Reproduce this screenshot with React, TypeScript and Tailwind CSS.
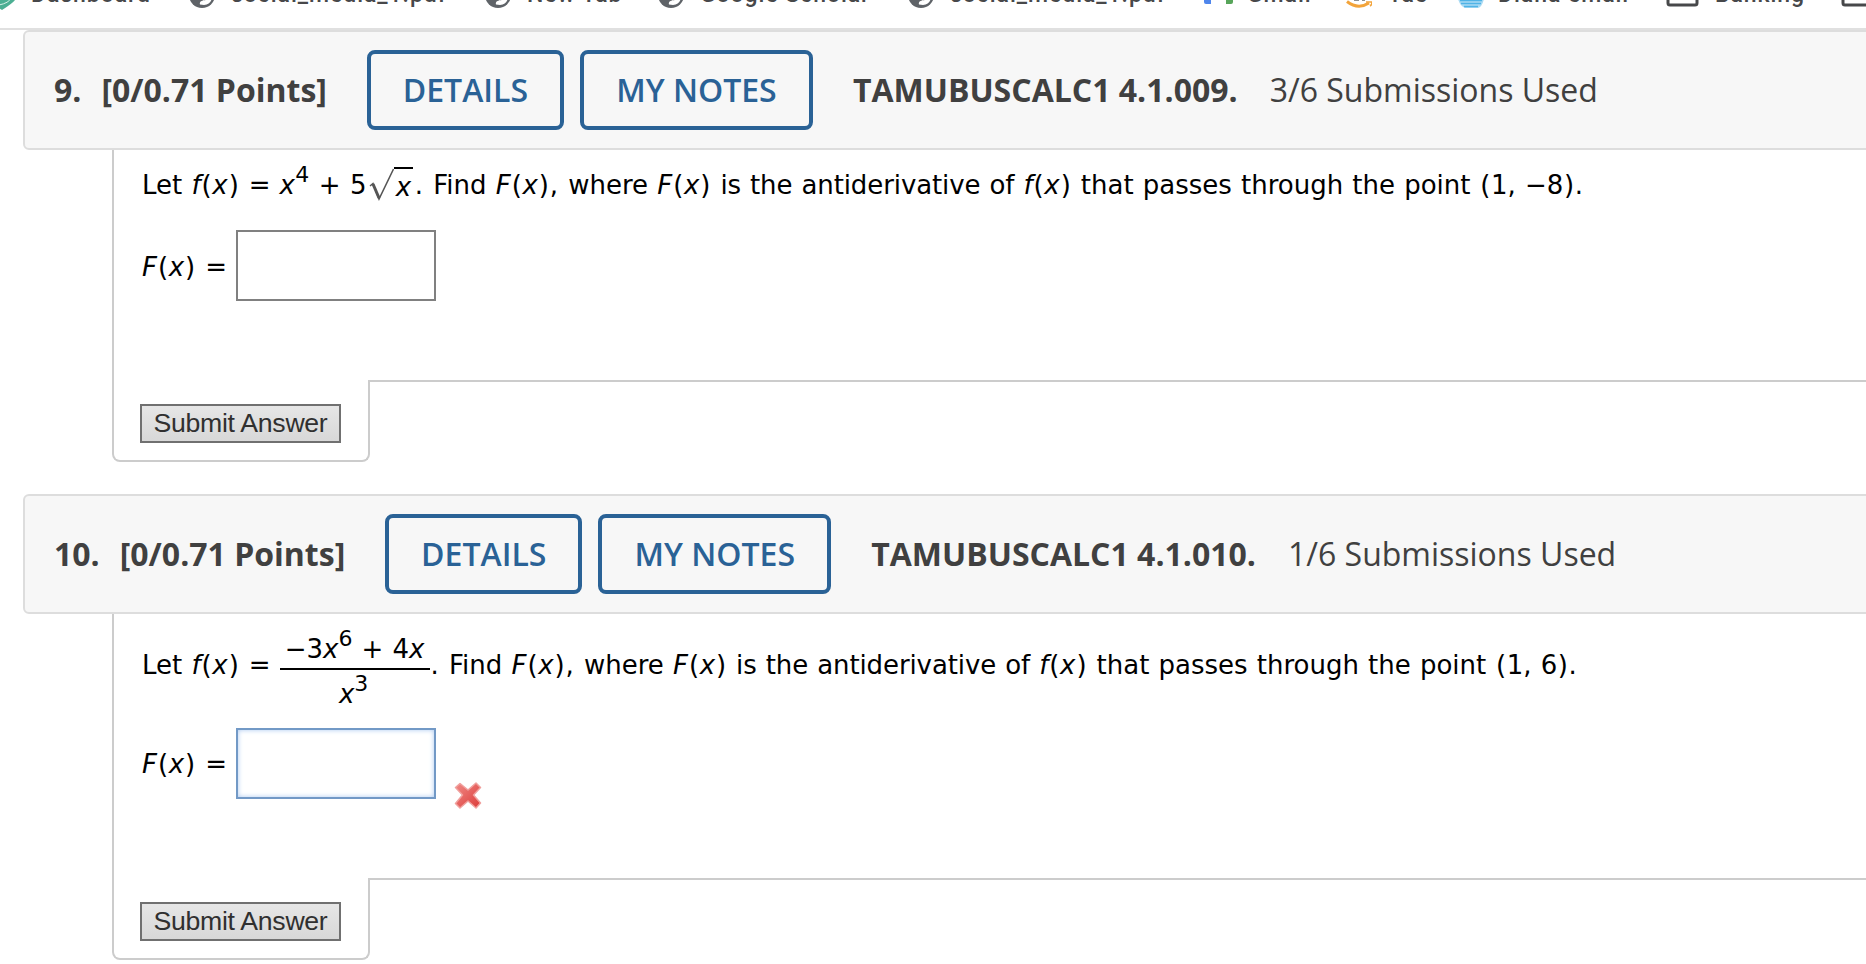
import React from 'react'

type Question = {
    number: string
    points: string
    source: string
    submissions: string
    expression: React.ReactNode
    point: string
    answered: boolean
}

type Bookmark = {
    label: string
    className: string
    icon: React.ReactNode
}

function GlobeIcon() {
    return (
        <svg viewBox="0 0 26 26" className="w-[26px] h-[26px] shrink-0">
            <circle cx="13" cy="13" r="13" fill="#5f6368" />
            <path d="M11 22.500 q-1 -3 3 -4 l1 -3 h8 q-1 7 -8 7.500 z" fill="#fff" />
            <path d="M14 15 h4 q0 4 -4 3z" fill="#5f6368" />
        </svg>
    )
}

function FolderIcon() {
    return (
        <svg viewBox="0 0 33 26" className="w-[33px] h-[26px] shrink-0">
            <path d="M2 2 h11 l4 4 h14 v15 q0 2 -2 2 h-25 q-2 0 -2 -2 z" fill="none" stroke="#47484a" strokeWidth="3" />
        </svg>
    )
}

const bookmarks: Bookmark[] = [
    {
        label: 'Dashboard',
        className: 'w-[190px] gap-[16px]',
        icon: (
            <svg viewBox="0 0 16 28" className="w-[16px] h-[28px] shrink-0">
                <path d="M0 12 L10 0 H16 V18 Q14 21 3 28 L0 26 Z" fill="#4caf93" />
                <path d="M0 23 Q10 21 12 16" fill="none" stroke="#d5efe7" strokeWidth="1" />
            </svg>
        ),
    },
    { label: 'social_media_1.pdf', className: 'w-[296px] gap-[16px]', icon: <GlobeIcon /> },
    { label: 'New Tab', className: 'w-[173px] gap-[16px]', icon: <GlobeIcon /> },
    { label: 'Google Scholar', className: 'w-[250px] gap-[16px]', icon: <GlobeIcon /> },
    { label: 'social_media_1.pdf', className: 'w-[295px] gap-[16px]', icon: <GlobeIcon /> },
    {
        label: 'Gmail',
        className: 'w-[143px] gap-[14px]',
        icon: (
            <svg viewBox="0 0 30 26" className="w-[30px] h-[26px] shrink-0">
                <path d="M1 2 h7 v20 h-5 q-2 0 -2 -2z" fill="#4f86ec" />
                <path d="M23 2 h7 v18 q0 2 -2 2 h-5z" fill="#57a55a" />
                <path d="M1 2 L15.500 12 L30 2" fill="none" stroke="#d94f3d" strokeWidth="5" />
            </svg>
        ),
    },
    {
        label: 'Tae',
        className: 'w-[112px] gap-[16px]',
        icon: (
            <svg viewBox="0 0 26 26" className="w-[26px] h-[26px] shrink-0">
                <path d="M8 17 h5 M16 17 h3" stroke="#222" strokeWidth="3" />
                <path d="M1 19.500 Q12 28 23 21" fill="none" stroke="#f3a43a" strokeWidth="3" />
                <path d="M20 20 h6 q0 3 -2 4" fill="none" stroke="#f3a43a" strokeWidth="1.500" />
            </svg>
        ),
    },
    {
        label: 'Diana email',
        className: 'w-[208px] gap-[14px]',
        icon: (
            <svg viewBox="0 0 26 26" className="w-[26px] h-[26px] shrink-0">
                <path d="M0 17 h26 Q24 25 20 26 H7 Q2 24 0 17z" fill="#a9daf3" />
                <path d="M2 18.500 h22 M3 21.500 h20 M6 24.500 h14" stroke="#4fb3e6" strokeWidth="1.500" />
            </svg>
        ),
    },
    { label: 'Banking', className: 'w-[175px] gap-[16px]', icon: <FolderIcon /> },
    { label: '', className: 'w-[33px]', icon: <FolderIcon /> },
]

function BookmarksBar() {
    return (
        <div className="h-[30px] border-b-2 border-[#e0e0e0] overflow-hidden">
            <div className="flex w-[1900px] -mt-[18px] -ml-[1px]">
                {bookmarks.map((bookmark, index) => (
                    <div key={index} className={`flex items-start shrink-0 ${bookmark.className}`}>
                        {bookmark.icon}
                        <span className="font-[Roboto,sans-serif] font-medium text-[23px] leading-[26px] tracking-[0.95px] whitespace-nowrap text-[#47484a]">
                            {bookmark.label}
                        </span>
                    </div>
                ))}
            </div>
        </div>
    )
}

function Fn({ name }: { name: string }) {
    return (
        <span>
            <i>{name}</i>
            <span className="pl-[1px] pr-[0.6px]">(</span>
            <i>x</i>
            <span className="pl-[1px] pr-[0.8px]">)</span>
        </span>
    )
}

function HeaderButton({ children, className }: { children: React.ReactNode; className: string }) {
    return (
        <button className={`h-20 border-4 border-[#2a6296] rounded-lg font-semibold text-[#2a6296] text-center ${className}`}>
            {children}
        </button>
    )
}

function WrongMark() {
    return (
        <svg viewBox="0 0 28 28" className="w-7 h-7 ml-[18px] mt-[53px]">
            <defs>
                <linearGradient id="wrong" x1="0" y1="0" x2="1" y2="1">
                    <stop offset="0" stopColor="#f08a86" />
                    <stop offset="1" stopColor="#dc3b39" />
                </linearGradient>
            </defs>
            <path d="M6 2.500 L14 9 L22 2 L26.500 6.500 L19.500 14 L26.500 22 L22 27 L14 20 L6 27 L1.500 22.500 L8.500 14 L1.500 6.500 Z" fill="url(#wrong)" stroke="#f0a09d" strokeWidth="1.500" strokeLinejoin="round" />
        </svg>
    )
}

function Radical() {
    return (
        <span className="inline-flex ml-[2px] mr-[1px]">
            <svg viewBox="0 0 25 36" className="w-[25px] h-[36px] -mt-[2px]">
                <path d="M1 20 L4 17.500 L10 33 L24.500 3" fill="none" stroke="#555" strokeWidth="1.500" />
                <path d="M4 18 L10 32" stroke="#555" strokeWidth="3" />
            </svg>
            <i className="block w-[19px] h-8 -mt-[1px] border-t-2 border-black leading-[37px] pl-[2px]">x</i>
        </span>
    )
}

function Fraction() {
    return (
        <span className="flex flex-col items-center w-[150px] ml-[9px]">
            <span className="h-[42px] leading-[46px] w-full text-center border-b-2 border-black box-content">
                −3<i>x</i><sup className="text-[22px] leading-none -top-[12px]">6</sup> + 4<i>x</i>
            </span>
            <span className="h-[44px] leading-[48px] pr-[2px]">
                <i>x</i><sup className="text-[22px] leading-none -top-[12px]">3</sup>
            </span>
        </span>
    )
}

const questions: Question[] = [
    {
        number: '9.',
        points: '[0/0.71 Points]',
        source: 'TAMUBUSCALC1 4.1.009.',
        submissions: '3/6 Submissions Used',
        expression: (
            <span className="flex ml-[9px]">
                <span className="tracking-[0.2px]"><i>x</i><sup className="text-[22px] leading-none -top-[12px]">4</sup> + 5</span>
                <Radical />
            </span>
        ),
        point: '1, −8',
        answered: false,
    },
    {
        number: '10.',
        points: '[0/0.71 Points]',
        source: 'TAMUBUSCALC1 4.1.010.',
        submissions: '1/6 Submissions Used',
        expression: <Fraction />,
        point: '1, 6',
        answered: true,
    },
]

function QuestionCard({ question }: { question: Question }) {
    return (
        <div className="mb-8">

            {/* Header */}
            <div className="flex items-center h-[120px] ml-[23px] -mr-2 pl-[29px] border-2 border-[#ddd] rounded-md bg-[#f7f7f7] font-['Open_Sans',sans-serif] text-[32px] text-[#404040] whitespace-nowrap">
                <span className="font-bold">{question.number}</span>
                <span className="font-bold ml-[20px]">{question.points}</span>
                <HeaderButton className="w-[197px] ml-[40px]">DETAILS</HeaderButton>
                <HeaderButton className="w-[233px] ml-4">MY NOTES</HeaderButton>
                <span className="font-bold ml-[40px]">{question.source}</span>
                <span className="ml-[32px]">{question.submissions}</span>
            </div>

            {/* Body */}
            <div className={`ml-[112px] border-l-2 border-[#ccc] pl-[28px] font-['DejaVu_Sans',sans-serif] text-[26px] text-black [word-spacing:0.9px] ${question.answered ? 'h-[264px]' : 'h-[230px]'}`}>
                <div className={`flex items-start whitespace-pre ${question.answered ? 'h-[114px] pt-[12px]' : 'h-[80px] pt-[18px]'}`}>
                    <span className={question.answered ? 'leading-[32px] pt-[23px]' : 'leading-[32px] pt-[1px]'}>
                        Let <Fn name="f" /> =
                    </span>
                    <span className="leading-[34px]">{question.expression}</span>
                    <span className={question.answered ? 'leading-[32px] pt-[23px]' : 'leading-[32px] pt-[1px]'}>
                        <span className="pl-[1px] pr-[1px]">.</span> Find <Fn name="F" />
                        <span className="pr-[1px]">,</span> where <Fn name="F" />
                        <span className="tracking-[-0.1px]"> is the antiderivative of </span>
                        <Fn name="f" /> that passes through the point{' '}
                        <span className="px-[0.6px]">(</span>{question.point}<span className="px-[0.6px]">)</span>.
                    </span>
                </div>
                <div className="flex items-start">
                    <span className={`w-[94px] leading-[34px] whitespace-nowrap ${question.answered ? 'pt-[19px]' : 'pt-[20px]'}`}><Fn name="F" /> =</span>
                    <input
                        readOnly
                        className={`w-[200px] h-[71px] border-2 bg-white outline-none ${question.answered ? 'border-[#7299c6] shadow-[inset_0_0_5px_#a9c8f0]' : 'border-[#808080]'}`}
                    />
                    {question.answered && <WrongMark />}
                </div>
            </div>

            {/* Submit */}
            <div className="flex ml-[112px]">
                <div className="w-[258px] h-[82px] border-2 border-t-0 border-[#ccc] rounded-b-lg pt-6 pl-[26px]">
                    <button className="block w-[201px] h-[39px] pb-[1px] border-2 border-[#707070] bg-linear-to-b from-[#e6e6e6] to-[#d8d8d8] font-['Liberation_Sans',sans-serif] text-[26.67px] leading-[34px] tracking-[-0.3px] text-[#303030] whitespace-nowrap">
                        Submit Answer
                    </button>
                </div>
                <div className="flex-1 border-t-2 border-[#ccc] -ml-[1px] h-[2px]" />
            </div>

        </div>
    )
}

export default function App() {
    return (
        <div className="w-[1866px] h-[964px] overflow-hidden bg-white">
            <BookmarksBar />
            {questions.map((question) => (
                <QuestionCard key={question.number} question={question} />
            ))}
        </div>
    )
}
